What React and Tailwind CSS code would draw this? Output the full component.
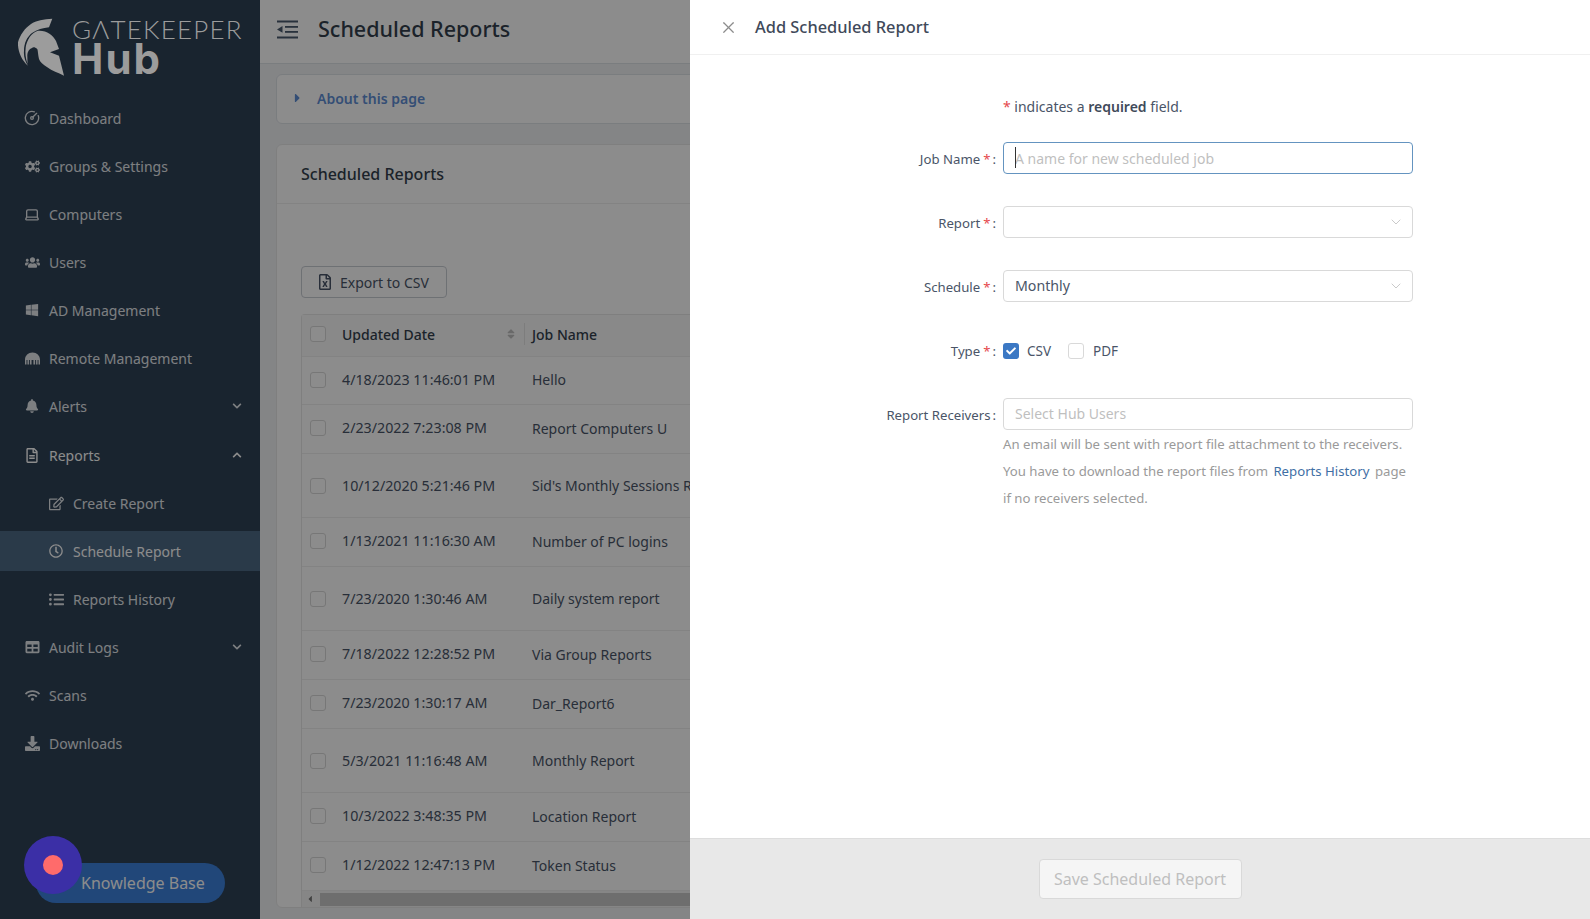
import React from "react";
import {
  FaUsers,
  FaWindows,
  FaBell,
  FaRegFileAlt,
  FaRegEdit,
  FaRegClock,
  FaListUl,
  FaTable,
  FaWifi,
  FaDownload,
  FaChevronDown,
  FaChevronUp,
  FaCogs,
  FaCaretRight,
  FaCaretLeft,
  FaSort,
  FaRegFileExcel,
  FaCheck,
} from "react-icons/fa";
import { LuCircleGauge, LuLaptop, LuX, LuChevronDown } from "react-icons/lu";

const RemoteIcon = ({ className }) => (
  <svg viewBox="0 0 16 13" className={className} fill="currentColor">
    <path d="M0 13V7.500C0 3.500 3.500 0 8 0s8 3.500 8 7.500V13h-1.600V8h-1v5h-1.600V8h-1v5H9V8H7v5H5.200V8h-1v5H2.600V8h-1v5z" />
  </svg>
);

const HelmetLogo = () => (
  <svg viewBox="0 0 48 60" className="w-[48px] h-[60px] shrink-0" fill="currentColor">
    <path d="M34.300 0.700C26 1 18 2.500 13 6C7 10 2 17 0 24.300C-0.500 32 3 42 10 47.700C7 43 5.500 38 6 33C6 25 9 19 14 15C19 11.500 25 10 31 9.300Z" />
    <path d="M20 12.800C28 12 35 17 38 23L41 31L32 34.300L41 37.700L46 57.700C40 54.500 34 53 29.300 49.300C25 46.500 22 44 21 41C20 37 20 33 19.300 31C17 29 15 29 14 30C11 31 9.500 34 9.300 37L9.500 46C7.500 40 7 35 7.700 29.300C9 22 13 15 20 12.800Z" />
  </svg>
);

const MenuFoldIcon = () => (
  <svg viewBox="0 0 21 19" className="w-[21px] h-[19px] shrink-0 text-[#4a5a6e]" fill="currentColor">
    <rect x="0" y="0.500" width="21" height="2" />
    <rect x="8" y="6" width="13" height="1.800" />
    <rect x="8" y="11" width="13" height="1.800" />
    <rect x="0" y="16.500" width="21" height="2" />
    <path d="M0 9.400L5.500 6V12.800Z" />
  </svg>
);

const menu = [
  { label: "Dashboard", icon: <LuCircleGauge className="w-4 h-4" /> },
  { label: "Groups & Settings", icon: <FaCogs className="w-[15px] h-[15px]" /> },
  { label: "Computers", icon: <LuLaptop className="w-[17px] h-[17px]" /> },
  { label: "Users", icon: <FaUsers className="w-[15px] h-[15px]" /> },
  { label: "AD Management", icon: <FaWindows className="w-[14px] h-[14px]" /> },
  { label: "Remote Management", icon: <RemoteIcon className="w-[15px] h-[13px]" /> },
  { label: "Alerts", icon: <FaBell className="w-[14px] h-[14px]" />, arrow: "down" },
  { label: "Reports", icon: <FaRegFileAlt className="w-[14px] h-[15px]" />, arrow: "up", open: true },
  { label: "Create Report", icon: <FaRegEdit className="w-[15px] h-[15px]" />, sub: true },
  { label: "Schedule Report", icon: <FaRegClock className="w-[14px] h-[14px]" />, sub: true, active: true },
  { label: "Reports History", icon: <FaListUl className="w-[15px] h-[15px]" />, sub: true },
  { label: "Audit Logs", icon: <FaTable className="w-[15px] h-[14px]" />, arrow: "down" },
  { label: "Scans", icon: <FaWifi className="w-[15px] h-[15px]" /> },
  { label: "Downloads", icon: <FaDownload className="w-[15px] h-[15px]" /> },
];

const reports = [
  { date: "4/18/2023 11:46:01 PM", job: "Hello", h: "h-[48px] pb-[2px]" },
  { date: "2/23/2022 7:23:08 PM", job: "Report Computers U", h: "h-[49px] pb-[2px]" },
  { date: "10/12/2020 5:21:46 PM", job: "Sid's Monthly Sessions Report", h: "h-[64px]" },
  { date: "1/13/2021 11:16:30 AM", job: "Number of PC logins", h: "h-[49px] pb-[2px]" },
  { date: "7/23/2020 1:30:46 AM", job: "Daily system report", h: "h-[64px]" },
  { date: "7/18/2022 12:28:52 PM", job: "Via Group Reports", h: "h-[49px] pb-[2px]" },
  { date: "7/23/2020 1:30:17 AM", job: "Dar_Report6", h: "h-[49px] pb-[2px]" },
  { date: "5/3/2021 11:16:48 AM", job: "Monthly Report", h: "h-[64px]" },
  { date: "10/3/2022 3:48:35 PM", job: "Location Report", h: "h-[49px] pb-[2px]" },
  { date: "1/12/2022 12:47:13 PM", job: "Token Status", h: "h-[49px] pb-[2px]" },
];

const Sidebar = () => (
  <aside className="w-[260px] shrink-0 h-full flex flex-col bg-[#2f4256] text-[#e4e8ec]">
    {/* logo sits above the mask, it stays brighter than the rest of the page */}
    <div className="relative z-10 h-[98px] shrink-0 flex items-start pl-[18px] pt-[18px] gap-[6px] text-[#9c9c9c]">
      <HelmetLogo />
      <div className="flex flex-col">
        <span className="font-['Lato',sans-serif] font-light text-[26px] leading-[20px] mt-[1px] tracking-[1.2px] whitespace-nowrap">
          GΛTEKEEPER
        </span>
        <span className="font-['Inter',sans-serif] font-bold text-[42px] leading-[34px] mt-[3px] ml-[0px] tracking-[2px]">
          Hub
        </span>
      </div>
    </div>
    <nav className="flex flex-col gap-2 text-[14px]">
      {menu.map((item) => (
        <div
          key={item.label}
          className={`h-10 flex items-center pr-[18px] ${item.sub ? "pl-[48px]" : "pl-[24px]"} ${item.active ? "bg-[#4e6a85]" : ""} ${item.open || item.active ? "text-white" : ""} ${item.open ? "mt-px" : ""}`}
        >
          <span className="w-[16px] flex justify-center shrink-0 mr-[9px]">{item.icon}</span>
          <span className="flex-1 whitespace-nowrap">{item.label}</span>
          {item.arrow === "down" && <FaChevronDown className="w-[10px] h-[10px]" />}
          {item.arrow === "up" && <FaChevronUp className="w-[10px] h-[10px]" />}
        </div>
      ))}
    </nav>
    <div className="mt-auto mb-4 ml-[36px] w-[189px] h-10 rounded-full bg-[#3c81dc] flex items-center pl-[45px] text-white text-[16px] whitespace-nowrap">
      Knowledge Base
    </div>
  </aside>
);

const Main = () => (
  <main className="flex-1 min-w-0 h-full bg-[#f0f2f5] text-[#4a5568] overflow-hidden">
    <header className="h-[64px] bg-white border-b border-[#dfe3e8] flex items-center pl-[17px] pb-[4px] gap-[20px]">
      <MenuFoldIcon />
      <h1 className="text-[21.5px] font-medium text-[#333f4d] whitespace-nowrap">Scheduled Reports</h1>
    </header>
    <div className="pl-[16px] pr-[17px] pt-[10px] flex flex-col gap-[20px]">
      <div className="h-[50px] bg-white border border-[#dfe3e8] rounded-md flex items-center pl-[14px] pb-[2px] gap-[13px]">
        <FaCaretRight className="w-[13px] h-[14px] text-[#5f8fd6]" />
        <span className="text-[14px] font-semibold text-[#5f8fd6]">About this page</span>
      </div>
      <section className="bg-white border border-[#e8e8e8] rounded-md">
        <div className="h-[59px] border-b border-[#eeeeee] flex items-center pl-[24px] text-[16px] font-medium text-[#333f4d]">
          Scheduled Reports
        </div>
        <div className="px-[24px] pt-[62px]">
          <button className="h-[32px] w-[146px] border border-[#c9ced4] rounded flex items-center pl-[16px] gap-2 text-[14px] text-[#4a5568] bg-white">
            <FaRegFileExcel className="w-[14px] h-[16px]" />
            Export to CSV
          </button>
          <div className="mt-[16px] border border-[#e8e8e8] border-b-0 rounded-t text-[14px]">
            <div className="grid grid-cols-[40px_183px_1fr] h-[42px] pb-[3px] items-center bg-[#fafafa] border-b border-[#eeeeee] font-medium text-[#333f4d]">
              <span className="w-4 h-4 ml-[8px] rounded-[3px] border border-[#d9d9d9] bg-white" />
              <div className="flex items-center justify-between h-[22px] border-r border-[#e4e4e4] pr-[8px]">
                <span>Updated Date</span>
                <FaSort className="w-[10px] h-[12px] text-[#bfbfbf]" />
              </div>
              <span className="pl-[7px]">Job Name</span>
            </div>
            {reports.map((row) => (
              <div key={row.date} className={`grid grid-cols-[40px_183px_1fr] items-center border-b border-[#eeeeee] ${row.h}`}>
                <span className="w-4 h-4 ml-[8px] rounded-[3px] border border-[#d9d9d9] bg-white" />
                <span className="whitespace-nowrap text-[14.25px]">{row.date}</span>
                <span className="pl-[7px] whitespace-nowrap">{row.job}</span>
              </div>
            ))}
            <div className="h-4 bg-[#f5f5f5] flex items-center pl-[4px] gap-[6px]">
              <FaCaretLeft className="w-[8px] h-[10px] text-[#777777]" />
              <div className="h-[13px] flex-1 bg-[#c8c8c8]" />
            </div>
          </div>
        </div>
      </section>
    </div>
  </main>
);

const Label = ({ text, required }) => (
  <label className="h-8 pt-[4px] flex items-center justify-end whitespace-nowrap text-[13.2px] text-[#4a5568]">
    {text}
    {required && <span className="text-[#e5484d] ml-[3px]">*</span>}
    <span className="ml-[2px]">:</span>
  </label>
);

const Drawer = () => (
  <div className="absolute top-0 bottom-0 right-0 w-[900px] bg-white flex flex-col text-[14px] text-[#4a5568]">
    <div className="h-[55px] shrink-0 border-b border-[#f0f0f0] flex items-center pl-[29px] gap-[17px]">
      <LuX className="w-[19px] h-[19px] text-[#8c8c8c]" strokeWidth={1.5} />
      <h2 className="text-[16.4px] font-medium text-[#3f4a5a]">Add Scheduled Report</h2>
    </div>
    <div className="flex-1 pt-[41px]">
      <p className="ml-[313px] h-[22px] leading-[22px]">
        <span className="text-[#e5484d]">*</span> indicates a <b className="font-semibold text-[#3f4a5a]">required</b> field.
      </p>
      <div className="mt-6 grid grid-cols-[306px_410px] gap-x-[7px] gap-y-8">
        <Label text="Job Name" required />
        <div className="relative">
          <input
            readOnly
            placeholder="A name for new scheduled job"
            className="w-full h-8 rounded border border-[#6494c0] px-[11px] text-[14px] placeholder:text-[#bfbfbf] outline-none"
          />
          <span className="absolute left-[12px] top-[5px] w-px h-[21px] bg-[#333333]" />
        </div>

        <Label text="Report" required />
        <div className="h-8 rounded border border-[#d9d9d9] flex items-center justify-end pr-[8px]">
          <LuChevronDown className="w-4 h-4 text-[#bfbfbf]" strokeWidth={1.25} />
        </div>

        <Label text="Schedule" required />
        <div className="h-8 rounded border border-[#d9d9d9] flex items-center justify-between pl-[11px] pr-[8px]">
          <span className="text-[14.2px] pb-[1px]">Monthly</span>
          <LuChevronDown className="w-4 h-4 text-[#bfbfbf]" strokeWidth={1.25} />
        </div>

        <Label text="Type" required />
        <div className="h-8 pt-[2px] flex items-center">
          <span className="w-4 h-4 rounded-[3px] bg-[#3b78c4] flex items-center justify-center">
            <FaCheck className="w-[10px] h-[10px] text-white" />
          </span>
          <span className="ml-[8px] text-[13.5px]">CSV</span>
          <span className="ml-[17px] w-4 h-4 rounded-[3px] border border-[#d9d9d9]" />
          <span className="ml-[9px] text-[13.5px]">PDF</span>
        </div>

        <Label text="Report Receivers" />
        <div>
          <div className="h-8 rounded border border-[#d9d9d9] flex items-center pl-[11px] pb-[2px] text-[#bfbfbf]">Select Hub Users</div>
          <div className="mt-px text-[13.2px] leading-[27px] text-[#9a9a9a] whitespace-nowrap">
            <p>An email will be sent with report file attachment to the receivers.</p>
            <p>
              You have to download the report files from <a className="text-[#3f6fa5] ml-[2px] mr-[2px]">Reports History</a> page
            </p>
            <p>if no receivers selected.</p>
          </div>
        </div>
      </div>
    </div>
    <div className="h-[81px] shrink-0 bg-[#e8e8e8] border-t border-[#dddddd] flex items-center justify-center">
      <button className="w-[203px] h-10 rounded bg-[#f5f5f5] border border-[#d9d9d9] text-[16px] text-[#bfbfbf]">
        Save Scheduled Report
      </button>
    </div>
  </div>
);

export default function App() {
  return (
    <div className="relative w-screen h-screen overflow-hidden flex font-['Noto_Sans',sans-serif]">
      <Sidebar />
      <Main />
      {/* mask over page */}
      <div className="absolute inset-0 bg-black/45" />
      <Drawer />
      {/* chat widget */}
      <div className="absolute left-[24px] top-[836px] w-[58px] h-[58px] rounded-full bg-[#3b2fa6] flex items-center justify-center">
        <span className="w-5 h-5 rounded-full bg-[#ff6b6b]" />
      </div>
    </div>
  );
}
